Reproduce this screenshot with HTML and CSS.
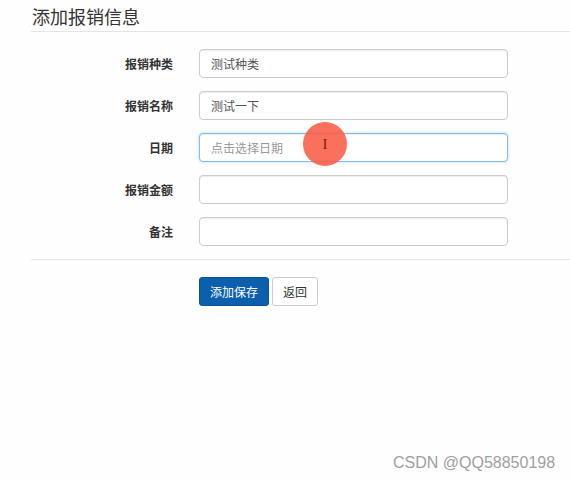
FILE: index.html
```html
<!DOCTYPE html>
<html lang="zh-CN">
<head>
<meta charset="utf-8">
<title>添加报销信息</title>
<link rel="stylesheet" href="styles.css">
</head>
<body>
<div class="page">
  <h1 class="title">添加报销信息</h1>
  <form class="form">
    <div class="row">
      <label class="label">报销种类</label>
      <input class="field" type="text" value="测试种类">
    </div>
    <div class="row">
      <label class="label">报销名称</label>
      <input class="field" type="text" value="测试一下">
    </div>
    <div class="row">
      <label class="label">日期</label>
      <input class="field focus" type="text" placeholder="点击选择日期">
    </div>
    <div class="row">
      <label class="label">报销金额</label>
      <input class="field" type="text">
    </div>
    <div class="row">
      <label class="label">备注</label>
      <input class="field" type="text">
    </div>
    <div class="actions">
      <button type="button" class="btn btn-primary">添加保存</button>
      <button type="button" class="btn btn-default">返回</button>
    </div>
  </form>
  <div class="click-mark"><span class="ibeam">I</span></div>
  <div class="watermark">CSDN @QQ58850198</div>
</div>
</body>
</html>
```
FILE: styles.css
```css
html, body {
  margin: 0;
  padding: 0;
  background: #fefefe;
}
body {
  font-family: "Noto Sans CJK SC", "Noto Sans", sans-serif;
  color: #333;
}
.page {
  position: relative;
  width: 570px;
  height: 481px;
  overflow: hidden;
}
.title {
  margin: 0 0 0 31px;
  padding: 5px 0 3px 1px;
  font-size: 18px;
  font-weight: normal;
  line-height: 23px;
  color: #333;
  border-bottom: 1px solid #e5e5e5;
}
.form {
  margin: 17px 0 0 31px;
}
.row {
  display: flex;
  align-items: center;
  height: 28px;
  margin-bottom: 14px;
}
.label {
  width: 142px;
  text-align: right;
  font-size: 12px;
  font-weight: bold;
  color: #333;
}
.field {
  box-sizing: border-box;
  margin-left: 26px;
  width: 309px;
  height: 29px;
  padding: 0 11px;
  border: 1px solid #ccc;
  border-radius: 4px;
  box-shadow: inset 0 1px 1px rgba(0,0,0,0.075);
  font-family: "Noto Sans CJK SC", sans-serif;
  font-size: 12px;
  color: #555;
  background: #fff;
  outline: none;
}
.field::placeholder {
  color: #999;
}
.field.focus {
  border-color: #86bde6;
  box-shadow: inset 0 1px 1px rgba(0,0,0,0.075), 0 0 3px rgba(102,175,233,0.5);
}
.actions {
  border-top: 1px solid #e5e5e5;
  margin-top: 0;
  padding: 17px 0 0 168px;
  display: flex;
  gap: 3px;
}
.btn {
  box-sizing: border-box;
  height: 29px;
  padding: 0 9px;
  border-radius: 3px;
  font-family: "Noto Sans CJK SC", sans-serif;
  font-size: 12px;
  cursor: pointer;
}
.btn-primary {
  background: #0b5fac;
  border: 1px solid #0a539a;
  color: #fff;
  width: 70px;
}
.btn-default {
  background: #fff;
  border: 1px solid #ccc;
  color: #333;
  width: 46px;
}
.click-mark {
  position: absolute;
  left: 303px;
  top: 122px;
  width: 44px;
  height: 44px;
  border-radius: 50%;
  background: rgba(248, 92, 70, 0.88);
  display: flex;
  align-items: center;
  justify-content: center;
}
.ibeam {
  font-family: "Liberation Serif", serif;
  font-size: 15px;
  color: #7a1a10;
  line-height: 1;
}
.watermark {
  position: absolute;
  left: 393px;
  top: 454px;
  font-family: "Liberation Sans", sans-serif;
  font-size: 16px;
  color: #a0a0a0;
}
```
